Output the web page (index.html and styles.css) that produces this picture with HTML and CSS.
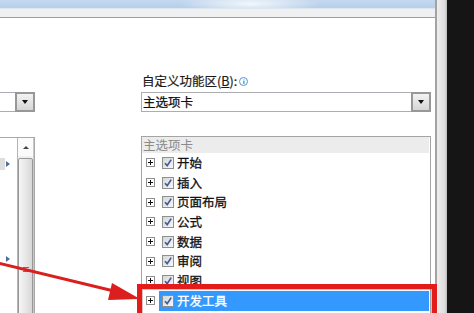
FILE: index.html
```html
<!DOCTYPE html>
<html lang="zh-CN">
<head>
<meta charset="utf-8">
<title>自定义功能区</title>
<link rel="stylesheet" href="styles.css">
</head>
<body>
<div class="screen">
  <div class="window">
    <div class="titlebar"></div>
    <div class="menubar"></div>
    <div class="content">
      <div class="col-left">
        <div class="combo combo-left">
          <span class="combo-text"></span>
          <span class="combo-btn"><span class="tri-down"></span></span>
        </div>
        <div class="listbox-left">
          <div class="left-items">
            <div class="left-item sel"><span class="tri-right"></span></div>
            <div class="left-item far"><span class="tri-right"></span></div>
          </div>
          <div class="scrollbar">
            <div class="sb-up"><span class="tri-up"></span></div>
            <div class="sb-thumb">
              <div class="grip"><i></i><i></i><i></i></div>
            </div>
          </div>
        </div>
      </div>
      <div class="col-right">
        <div class="label">自定义功能区(<u>B</u>):<span class="info">i</span></div>
        <div class="combo">
          <span class="combo-text">主选项卡</span>
          <span class="combo-btn"><span class="tri-down"></span></span>
        </div>
        <div class="listbox">
          <div class="lb-header">主选项卡</div>
          <div class="row"><span class="plus"></span><span class="item"><span class="chk"><svg viewBox="0 0 10 10"><path d="M2 5.2 L4.2 7.6 L8.2 1.6"/></svg></span><span class="txt">开始</span></span></div>
          <div class="row"><span class="plus"></span><span class="item"><span class="chk"><svg viewBox="0 0 10 10"><path d="M2 5.2 L4.2 7.6 L8.2 1.6"/></svg></span><span class="txt">插入</span></span></div>
          <div class="row"><span class="plus"></span><span class="item"><span class="chk"><svg viewBox="0 0 10 10"><path d="M2 5.2 L4.2 7.6 L8.2 1.6"/></svg></span><span class="txt">页面布局</span></span></div>
          <div class="row"><span class="plus"></span><span class="item"><span class="chk"><svg viewBox="0 0 10 10"><path d="M2 5.2 L4.2 7.6 L8.2 1.6"/></svg></span><span class="txt">公式</span></span></div>
          <div class="row"><span class="plus"></span><span class="item"><span class="chk"><svg viewBox="0 0 10 10"><path d="M2 5.2 L4.2 7.6 L8.2 1.6"/></svg></span><span class="txt">数据</span></span></div>
          <div class="row"><span class="plus"></span><span class="item"><span class="chk"><svg viewBox="0 0 10 10"><path d="M2 5.2 L4.2 7.6 L8.2 1.6"/></svg></span><span class="txt">审阅</span></span></div>
          <div class="row"><span class="plus"></span><span class="item"><span class="chk"><svg viewBox="0 0 10 10"><path d="M2 5.2 L4.2 7.6 L8.2 1.6"/></svg></span><span class="txt">视图</span></span></div>
          <div class="row selected"><span class="plus"></span><span class="item"><span class="chk"><svg viewBox="0 0 10 10"><path d="M2 5.2 L4.2 7.6 L8.2 1.6"/></svg></span><span class="txt">开发工具</span></span></div>
        </div>
      </div>
    </div>
  </div>
  <div class="frame-edge"></div>
  <div class="dark"></div>

  <div class="highlight-box"></div>
  <svg class="arrow" width="474" height="313" viewBox="0 0 474 313">
    <line x1="-2" y1="263" x2="118" y2="292" />
    <polygon points="140,299 112,283 108,300" />
  </svg>
</div>
</body>
</html>
```

FILE: styles.css
```css
* { box-sizing: border-box; }
html, body { margin: 0; padding: 0; }
body {
  width: 474px;
  height: 313px;
  overflow: hidden;
  background: #fff;
  font-family: "Noto Sans CJK SC", "Noto Sans", sans-serif;
  color: #111;
}
.screen {
  position: relative;
  display: flex;
  width: 474px;
  height: 313px;
  overflow: hidden;
}
.window {
  width: 437px;
  flex: none;
  display: flex;
  flex-direction: column;
  border-right: 2px solid #a3a3a3;
  background: #fff;
}
.titlebar {
  height: 8px;
  flex: none;
  background:
    radial-gradient(ellipse 70px 10px at 250px 4px, rgba(255,255,255,0.8), rgba(255,255,255,0) 100%),
    linear-gradient(to bottom, #c4d9ef, #b7cfe9);
}
.menubar {
  height: 10px;
  flex: none;
  background: #eff0f1;
  border-top: 1px solid #dde6ef;
  border-bottom: 1px solid #9d9d9d;
}
.content {
  flex: 1;
  display: flex;
}
.frame-edge {
  width: 10px;
  flex: none;
  background: linear-gradient(to right, #eeeeee, #dcdcdc 80%, #b9b9b9);
}
.dark {
  flex: 1;
  background: #151515;
}

/* left column */
.col-left {
  width: 35px;
  flex: none;
  display: flex;
  flex-direction: column;
}
.combo {
  display: flex;
  height: 20px;
  margin-top: 74px;
  border: 1px solid #abadb3;
  border-right: none;
  background: #fff;
}
.combo-left { border-left: none; }
.combo-text {
  flex: 1;
  font-size: 12.5px;
  line-height: 18px;
  padding-left: 1px;
  -webkit-text-stroke: 0.25px #111;
}
.combo-btn {
  width: 20px;
  height: 20px;
  margin-top: -1px;
  flex: none;
  display: flex;
  align-items: center;
  justify-content: center;
  border: 2px solid #979797;
  background: linear-gradient(to bottom, #f3f3f3, #e4e4e4 50%, #d6d6d6);
}
.tri-down {
  width: 0; height: 0;
  border-left: 3.5px solid transparent;
  border-right: 3.5px solid transparent;
  border-top: 4px solid #111;
}
.listbox-left {
  margin-top: 25px;
  flex: 1;
  display: flex;
  border-top: 1px solid #a9a9a9;
  border-right: 1px solid #a9a9a9;
}
.left-items {
  width: 17px;
  flex: none;
  display: flex;
  flex-direction: column;
}
.left-item {
  height: 12px;
  width: 10px;
  display: flex;
  align-items: center;
  justify-content: flex-end;
}
.left-item.sel {
  margin-top: 20px;
  background: linear-gradient(to right, #dedede 50%, #fff 50%);
}
.left-item.far { margin-top: 83px; }
.tri-right {
  width: 0; height: 0;
  border-top: 3px solid transparent;
  border-bottom: 3px solid transparent;
  border-left: 4px solid #4f6e9c;
}
.scrollbar {
  width: 17px;
  flex: none;
  display: flex;
  flex-direction: column;
  align-items: center;
  border-left: 1px solid #b4b4b4;
  border-right: 1px solid #c8c8c8;
  background: #f0f0f0;
}
.sb-up {
  height: 18px;
  width: 100%;
  display: flex;
  align-items: center;
  justify-content: center;
  background: #fbfbfb;
}
.tri-up {
  width: 0; height: 0;
  border-left: 3px solid transparent;
  border-right: 3px solid transparent;
  border-bottom: 3px solid #444;
}
.sb-thumb {
  margin-top: 2px;
  width: 15px;
  height: 240px;
  border: 1px solid #989898;
  border-radius: 2px;
  background: linear-gradient(to right, #f6f6f6, #e9e9e9 45%, #d8d8d8);
  display: flex;
  justify-content: center;
}
.grip {
  margin-top: 108px;
  display: flex;
  flex-direction: column;
  gap: 1px;
}
.grip i {
  display: block;
  width: 6px;
  height: 1px;
  background: #6f6f6f;
}

/* right column */
.col-right {
  width: 290px;
  margin-left: 106px;
  flex: none;
  display: flex;
  flex-direction: column;
}
.label {
  margin-top: 55px;
  height: 16px;
  font-size: 12.5px;
  line-height: 16px;
  padding-left: 1px;
  color: #1a1a1a;
  display: flex;
  align-items: center;
  white-space: nowrap;
  -webkit-text-stroke: 0.2px #1a1a1a;
}
.label u { text-underline-offset: 1px; }
.info {
  width: 9px;
  height: 9px;
  margin-left: 2px;
  border: 1px solid #5b8ed3;
  border-radius: 50%;
  font-family: "DejaVu Sans", sans-serif;
  font-size: 6px;
  line-height: 7px;
  text-align: center;
  color: #3c74c4;
  font-weight: bold;
  -webkit-text-stroke: 0;
}
.col-right .combo {
  margin-top: 3px;
}
.col-right .combo-text { padding-left: 1px; }
.listbox {
  margin-top: 24px;
  flex: 1;
  border: 1px solid #a4a4a4;
  border-bottom: none;
  display: flex;
  flex-direction: column;
}
.lb-header {
  height: 16px;
  flex: none;
  background: #ececec;
  color: #8a8a8a;
  font-size: 12.5px;
  line-height: 16px;
  padding-left: 1px;
  margin-right: 1px;
}
.row {
  height: 19.7px;
  flex: none;
  display: flex;
  align-items: center;
  padding-left: 4px;
  font-size: 12.5px;
}
.plus {
  width: 9px;
  height: 9px;
  flex: none;
  border: 1px solid #8f8f8f;
  background: #fff;
  position: relative;
}
.plus::before, .plus::after {
  content: "";
  position: absolute;
  background: #111;
}
.plus::before { left: 1px; top: 3px; width: 5px; height: 1px; }
.plus::after { left: 3px; top: 1px; width: 1px; height: 5px; }
.item {
  flex: 1;
  margin-left: 4px;
  margin-right: 1px;
  height: 100%;
  display: flex;
  align-items: center;
  padding-left: 3px;
}
.chk {
  width: 12px;
  height: 12px;
  flex: none;
  border: 1px solid #8e8f8f;
  background: linear-gradient(135deg, #d6d6d6, #f7f7f7);
  display: flex;
  align-items: center;
  justify-content: center;
}
.chk svg {
  width: 10px;
  height: 10px;
}
.chk path {
  fill: none;
  stroke: #3d5c9c;
  stroke-width: 1.7;
}
.txt {
  margin-left: 3px;
  line-height: 16px;
  white-space: nowrap;
  -webkit-text-stroke: 0.3px #111;
}
.row.selected .item {
  background: #3399ff;
  color: #fff;
}
.row.selected .txt { -webkit-text-stroke: 0.3px #fff; }

/* annotations */
.highlight-box {
  position: absolute;
  left: 137px;
  top: 284px;
  width: 300px;
  height: 50px;
  border: 5px solid #e31b1b;
  box-shadow: inset 0 0 0 1px rgba(120,0,0,0.25);
}
.arrow {
  position: absolute;
  left: 0;
  top: 0;
}
.arrow line {
  stroke: #db1e1e;
  stroke-width: 3;
}
.arrow polygon {
  fill: #db1e1e;
}
```
